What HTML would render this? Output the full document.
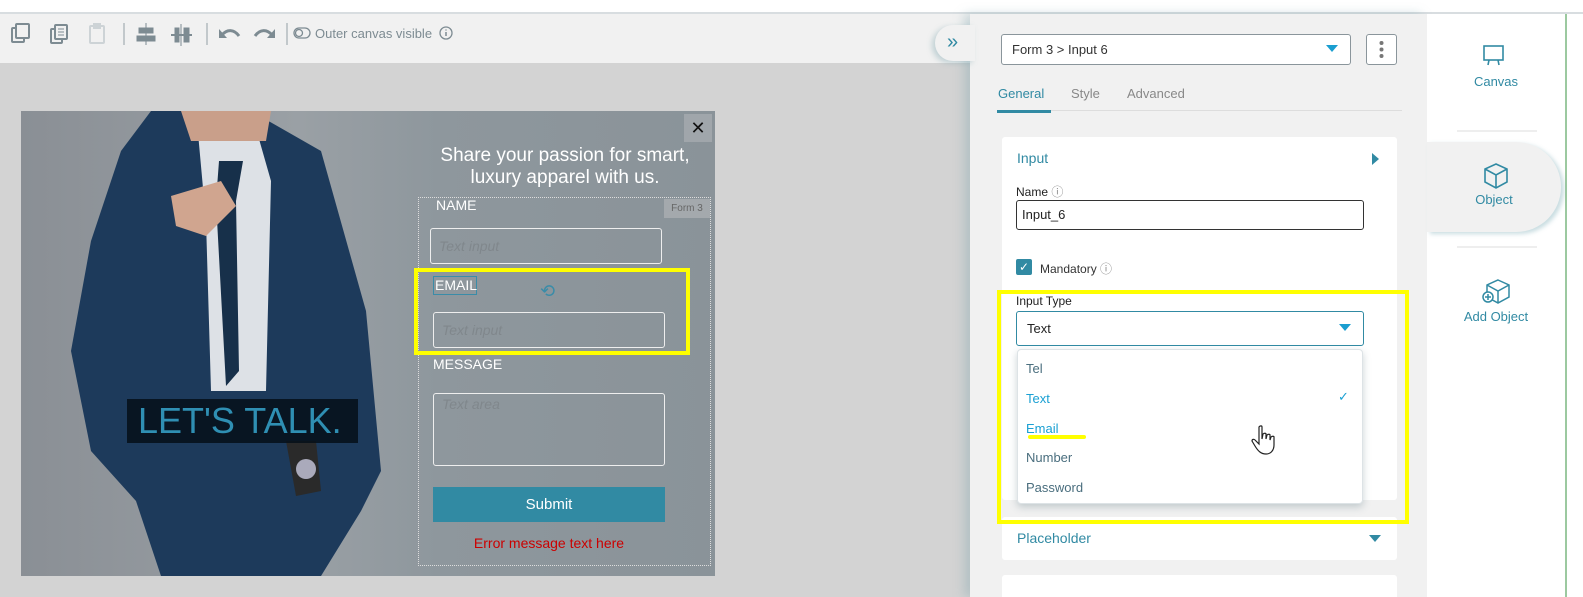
<!DOCTYPE html>
<html><head><meta charset="utf-8"><style>
*{box-sizing:border-box;margin:0;padding:0}
html,body{width:1583px;height:597px;overflow:hidden}
body{background:#fff;font-family:"Liberation Sans",sans-serif;position:relative}
#w{position:absolute;left:0;top:0;width:1583px;height:597px;overflow:hidden}
.a{position:absolute}
.t{font-size:13px;color:#555}
</style></head><body><div id="w">
<div class="a" style="left:0;top:12px;width:1583px;height:2px;background:#d8dde0"></div>
<div class="a" style="left:0;top:14px;width:970px;height:49px;background:#f1f1f1"></div>
<div class="a" style="left:0;top:63px;width:970px;height:534px;background:#d3d3d3"></div>
<svg class="a" style="left:0;top:14px" width="470" height="40" fill="none" stroke="#7d8b92" stroke-width="2">
<rect x="12" y="14" width="12" height="14" rx="1"/><rect x="16" y="10" width="13" height="14" rx="1" fill="#f1f1f1"/>
<rect x="51" y="15" width="11" height="14" rx="1"/><rect x="55" y="11" width="12" height="14" rx="1" fill="#f1f1f1"/><path d="M58 15h6M58 18h6M58 21h6" stroke-width="1"/>
<rect x="90" y="12" width="14" height="17" rx="1" stroke="#cdd3d6"/><rect x="94" y="10" width="6" height="4" stroke="#cdd3d6"/>
<path d="M124 9v22" stroke="#c2c8cb"/>
<path d="M146 9v22M139 14h14v5h-14zM137 22h18v5h-18z" fill="#7d8b92" stroke-width="1"/>
<path d="M181 10v22M175 14h4v14h-4zM184 14h5v14h-5z" fill="#7d8b92" stroke-width="1"/><path d="M171 21h21"/>
<path d="M207 9v22" stroke="#c2c8cb"/>
<path d="M222 21c5-6 12-6 17 1" stroke-width="3"/><path d="M219 15v9h8z" fill="#7d8b92" stroke="none"/>
<path d="M272 21c-5-6-12-6-17 1" stroke-width="3"/><path d="M275 15v9h-8z" fill="#7d8b92" stroke="none"/>
<path d="M287 9v22" stroke="#c2c8cb"/>
<rect x="294" y="14" width="16" height="10" rx="5" stroke-width="1.3"/><circle cx="299" cy="19" r="3.5" stroke-width="1.3"/>
<circle cx="446" cy="19" r="6" stroke-width="1.3"/><path d="M446 18v4M446 15.5v1" stroke-width="1.5"/>
</svg>
<div class="a t" style="left:315px;top:26px;color:#7d8b92;white-space:nowrap">Outer canvas visible</div>
<div class="a" style="left:21px;top:111px;width:694px;height:465px;background:linear-gradient(90deg,#8a8f95,#9aa0a5 40%,#8e979d 60%,#8a9399);overflow:hidden">
<svg width="694" height="465" class="a" style="left:0;top:0">
<path d="M130 0 L165 0 L185 20 L195 0 L230 0 L300 40 L345 200 L360 360 L340 400 L300 465 L140 465 L115 390 L70 340 L50 240 L70 130 L100 40 Z" fill="#1d3a5b"/>
<path d="M175 0 L230 0 L250 70 L245 280 L190 280 L185 110 Z" fill="#dde1e6"/>
<path d="M198 50 L222 50 L215 90 L218 260 L205 275 L195 90 Z" fill="#17304a"/>
<path d="M150 85 L200 70 L215 95 L185 125 L155 115 Z" fill="#d0a58f"/>
<path d="M160 0 L250 0 L245 30 L170 30Z" fill="#c99f8a"/>
<path d="M265 330 L295 330 L300 380 L275 385 Z" fill="#2a2a2a"/><circle cx="285" cy="358" r="10" fill="#aab"/>
</svg>
<div class="a" style="left:106px;top:288px;width:231px;height:44px;background:rgba(5,15,25,.85);color:#2f8fb3;font-size:36px;line-height:44px;padding-left:11px;white-space:nowrap;overflow:hidden">LET'S TALK.</div>
<div class="a" style="left:663px;top:3px;width:28px;height:28px;background:#a0a6ab;color:#111;font-size:18px;text-align:center;line-height:28px">✕</div>
</div>
<div class="a" style="left:420px;top:145px;width:290px;text-align:center;color:#fff;font-size:19px;line-height:22px">Share your passion for smart,<br>luxury apparel with us.</div>
<div class="a" style="left:418px;top:197px;width:293px;height:369px;border:1px dotted #ddd"></div>
<div class="a" style="left:664px;top:199px;width:46px;height:19px;background:#a4a9ad;color:#666;font-size:10px;line-height:19px;text-align:center">Form 3</div>
<div class="a" style="left:436px;top:197px;color:#fff;font-size:14px">NAME</div>
<div class="a" style="left:430px;top:228px;width:232px;height:36px;border:1px solid #eee;border-radius:3px;color:#80878c;font-style:italic;font-size:14px;padding:9px 8px">Text input</div>
<div class="a" style="left:414px;top:268px;width:276px;height:87px;border:4px solid #ff0"></div>
<div class="a" style="left:433px;top:276px;width:44px;height:19px;border:1px solid #3a8ca8;color:#fff;font-size:14px;line-height:17px;padding-left:1px">EMAIL</div>
<div class="a" style="left:540px;top:281px;color:#3a8ca8;font-size:18px">⟲</div>
<div class="a" style="left:433px;top:312px;width:232px;height:36px;border:1px solid #eee;border-radius:3px;color:#80878c;font-style:italic;font-size:14px;padding:9px 8px">Text input</div>
<div class="a" style="left:433px;top:356px;color:#fff;font-size:14px">MESSAGE</div>
<div class="a" style="left:433px;top:393px;width:232px;height:73px;border:1px solid #eee;border-radius:3px;color:#80878c;font-style:italic;font-size:14px;padding:2px 8px">Text area</div>
<div class="a" style="left:433px;top:487px;width:232px;height:35px;background:#318aa3;color:#fff;font-size:15px;text-align:center;line-height:35px">Submit</div>
<div class="a" style="left:433px;top:535px;width:232px;text-align:center;color:#c00;font-size:14px">Error message text here</div>
<div class="a" style="left:970px;top:14px;width:457px;height:583px;background:#f1f1f1;box-shadow:-6px 0 10px rgba(120,160,170,.35)"></div>
<div class="a" style="left:935px;top:25px;width:40px;height:36px;background:#f1f1f1;border-radius:18px 0 0 18px;box-shadow:-3px 2px 6px rgba(120,160,170,.4);color:#318aa3;font-size:20px;line-height:34px;padding-left:12px">»</div>
<div class="a" style="left:1001px;top:34px;width:350px;height:31px;background:#fff;border:1px solid #8a959b;border-radius:3px;font-size:13px;color:#333;padding:7px 10px">Form 3 &gt; Input 6</div>
<div class="a" style="left:1326px;top:45px;width:0;height:0;border-left:6px solid transparent;border-right:6px solid transparent;border-top:7px solid #1a9ed0"></div>
<div class="a" style="left:1366px;top:34px;width:31px;height:31px;background:#fff;border:1px solid #8a959b;border-radius:3px"></div>
<svg class="a" style="left:1366px;top:34px" width="31" height="31" fill="#777"><circle cx="15.5" cy="9" r="2"/><circle cx="15.5" cy="15.5" r="2"/><circle cx="15.5" cy="22" r="2"/></svg>
<div class="a" style="left:998px;top:86px;font-size:13px;color:#318aa3">General</div>
<div class="a" style="left:1071px;top:86px;font-size:13px;color:#888">Style</div>
<div class="a" style="left:1127px;top:86px;font-size:13px;color:#888">Advanced</div>
<div class="a" style="left:997px;top:110px;width:405px;height:1px;background:#ddd"></div>
<div class="a" style="left:997px;top:110px;width:54px;height:3px;background:#318aa3"></div>
<div class="a" style="left:1002px;top:137px;width:395px;height:363px;background:#fff;border-radius:3px"></div>
<div class="a" style="left:1017px;top:150px;font-size:14px;color:#318aa3">Input</div>
<div class="a" style="left:1372px;top:153px;width:0;height:0;border-top:6px solid transparent;border-bottom:6px solid transparent;border-left:7px solid #318aa3"></div>
<div class="a" style="left:1016px;top:183px;font-size:12px;color:#222">Name <span style="color:#888">ⓘ</span></div>
<div class="a" style="left:1016px;top:200px;width:348px;height:30px;border:1px solid #333;border-radius:3px;font-size:13px;color:#222;padding:6px 5px">Input_6</div>
<div class="a" style="left:1016px;top:259px;width:16px;height:16px;background:#318aa3;border-radius:2px;color:#fff;font-size:12px;text-align:center;line-height:16px">✓</div>
<div class="a" style="left:1040px;top:260px;font-size:12px;color:#333">Mandatory <span style="color:#888">ⓘ</span></div>
<div class="a" style="left:1016px;top:294px;font-size:12px;color:#222">Input Type</div>
<div class="a" style="left:1016px;top:311px;width:348px;height:35px;border:1px solid #318aa3;border-radius:3px;background:#fff;font-size:13px;color:#222;padding:9px 10px">Text</div>
<div class="a" style="left:1339px;top:324px;width:0;height:0;border-left:6px solid transparent;border-right:6px solid transparent;border-top:7px solid #1a9ed0"></div>
<div class="a" style="left:1002px;top:517px;width:395px;height:43px;background:#fff;border-radius:3px"></div>
<div class="a" style="left:1017px;top:530px;font-size:14px;color:#318aa3">Placeholder</div>
<div class="a" style="left:1369px;top:535px;width:0;height:0;border-left:6px solid transparent;border-right:6px solid transparent;border-top:7px solid #318aa3"></div>
<div class="a" style="left:1002px;top:575px;width:395px;height:22px;background:#fff;border-radius:3px 3px 0 0"></div>
<div class="a" style="left:1017px;top:349px;width:346px;height:155px;background:#fff;border:1px solid #dde3e6;border-radius:4px;box-shadow:0 3px 8px rgba(80,110,120,.3);font-size:13px">
<div class="a" style="left:8px;top:11px;color:#4a6e7e">Tel</div>
<div class="a" style="left:8px;top:41px;color:#1aa0d3">Text</div>
<div class="a" style="left:320px;top:39px;color:#1aa0d3">✓</div>
<div class="a" style="left:8px;top:71px;color:#1aa0d3">Email</div>
<div class="a" style="left:8px;top:100px;color:#4a6e7e">Number</div>
<div class="a" style="left:8px;top:130px;color:#4a6e7e">Password</div>
</div>
<div class="a" style="left:1028px;top:435px;width:58px;height:4px;background:#ff0;border-radius:2px"></div>
<svg class="a" style="left:1250px;top:424px" width="30" height="34" fill="#fff" stroke="#222" stroke-width="1.2"><path d="M9 3c1-1.5 3-1.5 3 0v12l1-5c1-1 3-1 3 0v5l1-4c1-1 3-1 3 0v5l1-3c1-1 3-1 3 0v8c0 5-3 9-8 9s-8-3-11-8l-3-5c0-2 2-2 3-1l4 4z"/></svg>
<div class="a" style="left:997px;top:290px;width:412px;height:234px;border:4px solid #ff0"></div>
<div class="a" style="left:1427px;top:14px;width:138px;height:583px;background:#fff"></div>
<div class="a" style="left:1565px;top:14px;width:2px;height:583px;background:#9cc9a0"></div>
<div class="a" style="left:1457px;top:130px;width:80px;height:2px;background:#eee"></div>
<div class="a" style="left:1457px;top:246px;width:80px;height:2px;background:#eee"></div>
<div class="a" style="left:1427px;top:142px;width:134px;height:90px;background:#f1f1f1;border-radius:0 45px 45px 0;box-shadow:3px 2px 4px rgba(120,170,180,.4)"></div>
<svg class="a" style="left:1480px;top:44px" width="30" height="24" fill="none" stroke="#318aa3" stroke-width="1.6"><rect x="4" y="2" width="19" height="14"/><path d="M9 16l-1 5M18 16l1 5"/></svg>
<div class="a" style="left:1427px;top:74px;width:138px;text-align:center;font-size:13px;color:#318aa3">Canvas</div>
<svg class="a" style="left:1482px;top:162px" width="28" height="28" fill="none" stroke="#318aa3" stroke-width="1.6"><path d="M14 2l11 5v13l-11 6-11-6V7zM3 7l11 6 11-6M14 13v13"/></svg>
<div class="a" style="left:1427px;top:192px;width:134px;text-align:center;font-size:13px;color:#318aa3">Object</div>
<svg class="a" style="left:1480px;top:278px" width="32" height="28" fill="none" stroke="#318aa3" stroke-width="1.5"><path d="M18 2l11 5v12l-11 6-11-6V7zM7 7l11 6 11-6M18 13v12"/><circle cx="8" cy="19" r="5" fill="#fff"/><path d="M8 16v6M5 19h6"/></svg>
<div class="a" style="left:1427px;top:309px;width:138px;text-align:center;font-size:13px;color:#318aa3">Add Object</div>
</div></body></html>
